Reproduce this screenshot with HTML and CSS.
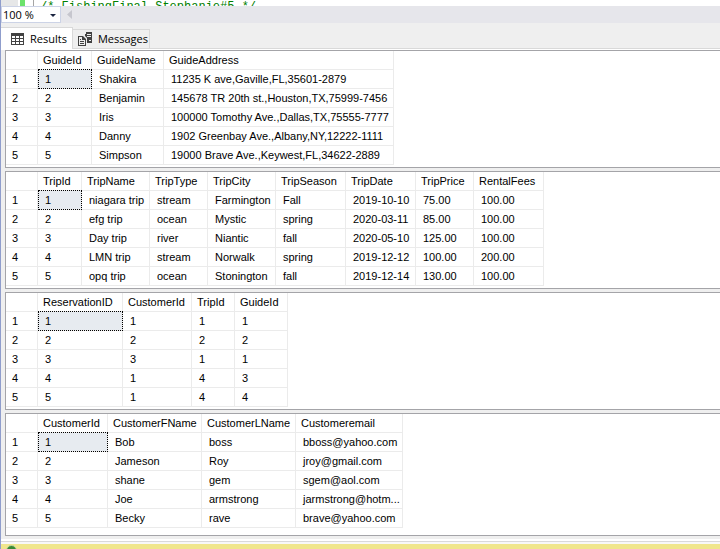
FILE: index.html
```html
<!DOCTYPE html>
<html lang="en">
<head>
<meta charset="utf-8">
<title>Query results</title>
<link rel="stylesheet" href="styles.css">
</head>
<body>
<div class="window">
  <div class="editor">
    <span class="gutter"></span><span class="change"></span><span class="outline"></span>
    <code>/* FishingFinal Stephanie#5 */</code>
  </div>
  <div class="toolbar">
    <label class="zoom">
      <select aria-label="Zoom"><option>100 %</option></select>
      <svg class="caret" viewBox="0 0 6 3" aria-hidden="true"><path d="M0 0h6L3 3z"/></svg>
    </label>
    <button class="scroll" aria-label="Scroll left"><svg viewBox="0 0 5 9" aria-hidden="true"><path d="M5 0v9L0 4.500z"/></svg></button>
  </div>
  <div class="tabs" role="tablist">
    <button class="tab active" role="tab" aria-selected="true">
      <svg class="icon-grid" viewBox="0 0 13 12" aria-hidden="true"><path fill-rule="evenodd" d="M0 0h13v12H0zM1 3v2h3V3zM5 3v2h3V3zM9 3v2h3V3zM1 6v2h3V6zM5 6v2h3V6zM9 6v2h3V6zM1 9v2h3V9zM5 9v2h3V9zM9 9v2h3V9z"/></svg>
      Results
    </button>
    <button class="tab" role="tab" aria-selected="false">
      <svg class="icon-msg" viewBox="0 0 14 14" aria-hidden="true"><path fill-rule="evenodd" d="M0 4h5l3 3v7H0zM1 5v8h6V8H4V5zM2 9h4v1H2zM2 11h4v1H2zM2 7h1v1H2zM8 0h6v11H9V6L7 4V2h1zM9 2v1h4V2zM9 4v1h4V4zM11 8v1h2V8z"/></svg>
      Messages
    </button>
  </div>
  <main class="panes">
    <section class="pane">
      <table class="guides">
        <colgroup><col><col><col><col></colgroup>
        <thead><tr><th></th><th>GuideId</th><th>GuideName</th><th>GuideAddress</th></tr></thead>
        <tbody>
          <tr><th>1</th><td class="selected">1</td><td>Shakira</td><td>11235 K ave,Gaville,FL,35601-2879</td></tr>
          <tr><th>2</th><td>2</td><td>Benjamin</td><td>145678 TR 20th st.,Houston,TX,75999-7456</td></tr>
          <tr><th>3</th><td>3</td><td>Iris</td><td>100000 Tomothy Ave.,Dallas,TX,75555-7777</td></tr>
          <tr><th>4</th><td>4</td><td>Danny</td><td>1902 Greenbay Ave.,Albany,NY,12222-1111</td></tr>
          <tr><th>5</th><td>5</td><td>Simpson</td><td>19000 Brave Ave.,Keywest,FL,34622-2889</td></tr>
        </tbody>
      </table>
    </section>
    <section class="pane">
      <table class="trips">
        <colgroup><col><col><col><col><col><col><col><col><col></colgroup>
        <thead><tr><th></th><th>TripId</th><th>TripName</th><th>TripType</th><th>TripCity</th><th>TripSeason</th><th>TripDate</th><th>TripPrice</th><th>RentalFees</th></tr></thead>
        <tbody>
          <tr><th>1</th><td class="selected">1</td><td>niagara trip</td><td>stream</td><td>Farmington</td><td>Fall</td><td>2019-10-10</td><td>75.00</td><td>100.00</td></tr>
          <tr><th>2</th><td>2</td><td>efg trip</td><td>ocean</td><td>Mystic</td><td>spring</td><td>2020-03-11</td><td>85.00</td><td>100.00</td></tr>
          <tr><th>3</th><td>3</td><td>Day trip</td><td>river</td><td>Niantic</td><td>fall</td><td>2020-05-10</td><td>125.00</td><td>100.00</td></tr>
          <tr><th>4</th><td>4</td><td>LMN trip</td><td>stream</td><td>Norwalk</td><td>spring</td><td>2019-12-12</td><td>100.00</td><td>200.00</td></tr>
          <tr><th>5</th><td>5</td><td>opq trip</td><td>ocean</td><td>Stonington</td><td>fall</td><td>2019-12-14</td><td>130.00</td><td>100.00</td></tr>
        </tbody>
      </table>
    </section>
    <section class="pane">
      <table class="reservations">
        <colgroup><col><col><col><col><col></colgroup>
        <thead><tr><th></th><th>ReservationID</th><th>CustomerId</th><th>TripId</th><th>GuideId</th></tr></thead>
        <tbody>
          <tr><th>1</th><td class="selected">1</td><td>1</td><td>1</td><td>1</td></tr>
          <tr><th>2</th><td>2</td><td>2</td><td>2</td><td>2</td></tr>
          <tr><th>3</th><td>3</td><td>3</td><td>1</td><td>1</td></tr>
          <tr><th>4</th><td>4</td><td>1</td><td>4</td><td>3</td></tr>
          <tr><th>5</th><td>5</td><td>1</td><td>4</td><td>4</td></tr>
        </tbody>
      </table>
    </section>
    <section class="pane last">
      <table class="customers">
        <colgroup><col><col><col><col><col></colgroup>
        <thead><tr><th></th><th>CustomerId</th><th>CustomerFName</th><th>CustomerLName</th><th>Customeremail</th></tr></thead>
        <tbody>
          <tr><th>1</th><td class="selected">1</td><td>Bob</td><td>boss</td><td>bboss@yahoo.com</td></tr>
          <tr><th>2</th><td>2</td><td>Jameson</td><td>Roy</td><td>jroy@gmail.com</td></tr>
          <tr><th>3</th><td>3</td><td>shane</td><td>gem</td><td>sgem@aol.com</td></tr>
          <tr><th>4</th><td>4</td><td>Joe</td><td>armstrong</td><td>jarmstrong@hotm...</td></tr>
          <tr><th>5</th><td>5</td><td>Becky</td><td>rave</td><td>brave@yahoo.com</td></tr>
        </tbody>
      </table>
    </section>
  </main>
  <footer class="status"><span class="ok"></span></footer>
</div>
</body>
</html>
```

FILE: styles.css
```css
* { box-sizing: border-box; }
body {
  margin: 0;
  height: 100vh;
  overflow: hidden;
  background: #efefef;
  color: #000;
  font: 11px/18px "Liberation Sans", sans-serif;
}
.window {
  display: flex;
  flex-direction: column;
  height: 100%;
  border-left: 1px solid #8f9dcc;
}
.editor {
  display: flex;
  height: 6px;
  overflow: hidden;
  background: #fff;
}
.editor code {
  margin-left: 6px;
  color: #008000;
  font: 12px/14px "Liberation Mono", monospace;
}
.gutter { width: 17px; background: #e6e7e8; }
.change { width: 5px; margin-left: 2px; background: #6ce26c; }
.outline { width: 1px; margin-left: 8px; background: #a5a5a5; }
.toolbar {
  display: flex;
  height: 17px;
  background: #e6e6eb;
}
.zoom { position: relative; display: flex; width: 60px; }
.zoom select {
  appearance: none;
  width: 100%;
  margin: 0;
  padding: 0 0 0 1px;
  border: 1px solid #ccd3e6;
  border-radius: 0;
  background: #fff;
  color: #000;
  font: 11px/14px "Open Sans", sans-serif;
}
.caret { position: absolute; right: 5px; top: 8px; width: 6px; height: 3px; fill: #1b2440; }
button { border: 0; padding: 0; background: none; color: inherit; }
.scroll { display: flex; align-items: center; margin-left: 6px; }
.scroll svg { width: 5px; height: 9px; fill: #c6c6ce; }
.tabs {
  display: flex;
  align-items: flex-end;
  height: 26px;
  margin-top: 1px;
  border-bottom: 1px solid #fff;
  background: linear-gradient(#d9d9d9, #d9d9d9) bottom / 100% 1px no-repeat;
}
.tab {
  display: flex;
  align-items: center;
  height: 20px;
  padding: 0 1px 0 5px;
  border: 1px solid #d9d9d9;
  border-left: 0;
  font: 11px/16px "Open Sans", sans-serif;
}
.tab.active {
  height: 22px;
  padding: 0 5px 0 10px;
  border-bottom: 0;
  background: #fff;
}
.tab svg { fill: #424242; }
.icon-grid { width: 13px; height: 12px; margin-right: 6px; }
.icon-msg { width: 14px; height: 14px; margin-right: 6px; }
.panes {
  display: flex;
  flex-direction: column;
  gap: 3px;
  padding-left: 4px;
}
.pane {
  padding-bottom: 2px;
  border: 1px solid #a4a4a8;
  border-right: 0;
  background: #fff;
}
.pane.last { padding-bottom: 7px; }
table {
  border-collapse: separate;
  border-spacing: 0;
  table-layout: fixed;
  width: 0;
}
th, td {
  height: 19px;
  padding: 0 0 0 7px;
  border: solid #ebebeb;
  border-width: 0 1px 1px 0;
  font-weight: 400;
  text-align: left;
  white-space: nowrap;
}
thead th { padding-left: 5px; }
tbody th { padding-left: 6px; }
.selected { position: relative; background: #e7ebf0; }
.selected::after {
  content: "";
  position: absolute;
  inset: -1px -1px -1px 0;
  border: 1px dotted #000;
}
col { width: 70px; }
col:first-child { width: 32px; }
.guides col:nth-child(2) { width: 54px; }
.guides col:nth-child(3) { width: 72px; }
.guides col:nth-child(4) { width: 230px; }
.trips col:nth-child(2) { width: 44px; }
.trips col:nth-child(3),
.trips col:nth-child(5) { width: 68px; }
.trips col:nth-child(4),
.trips col:nth-child(8) { width: 58px; }
.reservations col:nth-child(2) { width: 85px; }
.reservations col:nth-child(3) { width: 69px; }
.reservations col:nth-child(4) { width: 43px; }
.reservations col:nth-child(5) { width: 53px; }
.customers col:nth-child(3),
.customers col:nth-child(4) { width: 94px; }
.customers col:nth-child(5) { width: 107px; }
.status {
  flex: 1;
  margin-top: 3px;
  border-top: 2px solid #fff;
  background: linear-gradient(#d9d9d9 1px, #f8f8f8 1px 3px, #f0e68c 3px);
  overflow: hidden;
}
.ok {
  display: block;
  width: 11px;
  height: 11px;
  margin: 4px 0 0 5px;
  border: 1px solid #c8d8a0;
  border-radius: 50%;
  background: #388a34;
}
```
